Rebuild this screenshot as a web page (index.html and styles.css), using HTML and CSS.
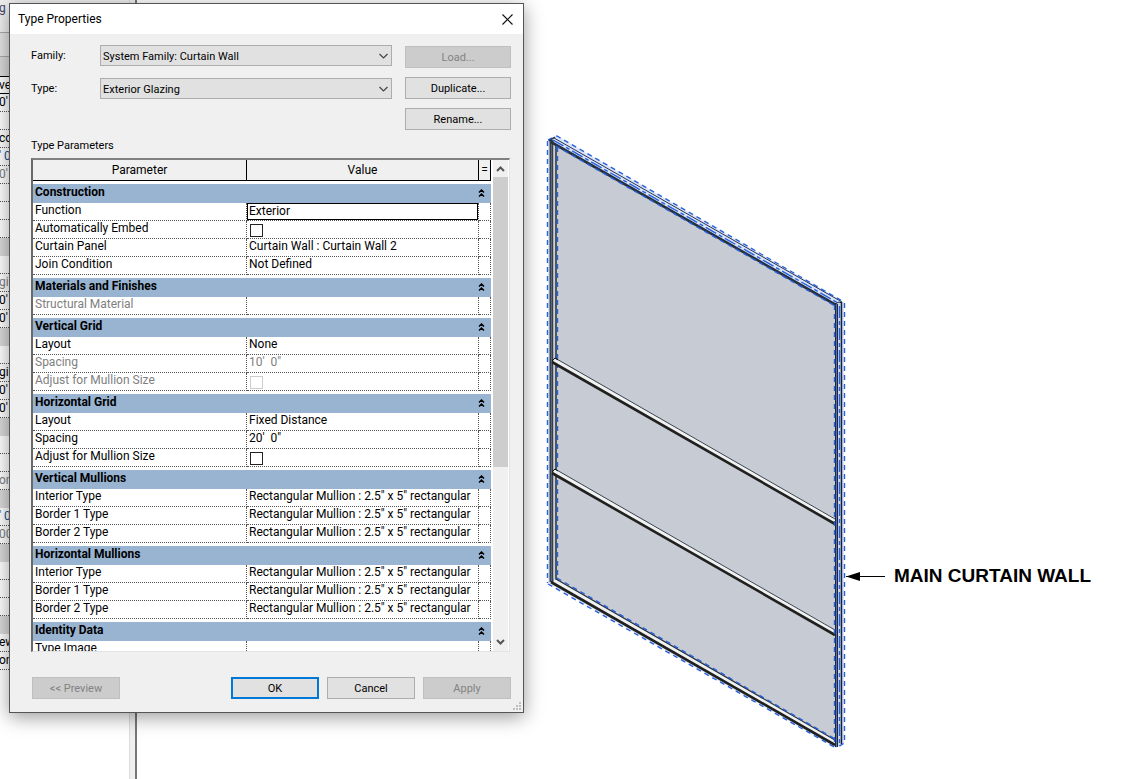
FILE: index.html
```
<!DOCTYPE html>
<html lang="en">

<head>
    <meta charset="UTF-8">
    <meta name="viewport" content="width=device-width, initial-scale=1.0">
    <title>Type Properties</title>
    <link rel="stylesheet" href="styles.css">
</head>

<body>
    <svg class="defs" width="0" height="0">
        <symbol id="collapse" viewBox="0 0 7 8">
            <path d="M1 3.5 3.5 1 6 3.5M1 7.5 3.5 5 6 7.5" fill="none" stroke="#000" stroke-width="1.5" />
        </symbol>
    </svg>

    <div class="workspace">
        <!-- properties palette -->
        <aside class="palette">
            <div class="palette-top">g</div>
            <div class="palette-filter"></div>
            <div class="palette-type"></div>
            <div class="palette-head">ve</div>
            <div class="prop">0'</div>
            <div class="prop"></div>
            <div class="prop">co</div>
            <div class="prop blue">' 0</div>
            <div class="prop dim">0'</div>
            <div class="prop"></div>
            <div class="prop"></div>
            <div class="prop"></div>
            <div class="prop section"></div>
            <div class="prop"></div>
            <div class="prop dim">gi</div>
            <div class="prop">0'</div>
            <div class="prop">0'</div>
            <div class="prop section"></div>
            <div class="prop"></div>
            <div class="prop">gi</div>
            <div class="prop">0'</div>
            <div class="prop">0'</div>
            <div class="prop section"></div>
            <div class="prop"></div>
            <div class="prop"></div>
            <div class="prop dim">on</div>
            <div class="prop section"></div>
            <div class="prop blue">' 0</div>
            <div class="prop dim">00</div>
            <div class="prop section"></div>
            <div class="prop"></div>
            <div class="prop"></div>
            <div class="prop"></div>
            <div class="prop section"></div>
            <div class="prop">ew</div>
            <div class="prop">on</div>
        </aside>
        <div class="splitter"></div>

        <!-- 3D view -->
        <main class="view">
            <svg class="drawing" viewBox="137 0 992 779" preserveAspectRatio="xMinYMin meet">
                <polygon points="548,140 557,136 844,302 844,743 836,748 548,583" fill="#dbe4fa" />
                <polygon points="556,145 835,305 835,742 556,581" fill="#c7cbd4" />

                <!-- left mullion -->
                <path d="M551.5 140V582" stroke="#35404d" stroke-width="4" />
                <path d="M551.5 142V581" stroke="#5d6876" />
                <path d="M554.5 144V579" stroke="#c9ced1" stroke-width="2" />
                <path d="M556 145V580" stroke="#242c36" stroke-width="1.5" />
                <path class="dash" d="M557.5 147V580" />
                <path class="dash" d="M547.5 141V583" />

                <!-- horizontal mullions -->
                <g>
                    <path d="M554 360 835 521" stroke="#f0f2f2" stroke-width="4" />
                    <path d="M555 358 835 519" stroke="#3b444f" />
                    <path d="M552 362 835 524" stroke="#20211f" stroke-width="2.6" />
                    <path d="M552 361 555 358 558 360" stroke="#111" fill="none" />
                    <path d="M554 471 835 632" stroke="#f0f2f2" stroke-width="4" />
                    <path d="M555 469 835 630" stroke="#3b444f" />
                    <path d="M552 473 835 635" stroke="#20211f" stroke-width="2.6" />
                    <path d="M552 472 555 469 558 471" stroke="#111" fill="none" />
                </g>

                <!-- sill -->
                <path d="M554 581 835 742" stroke="#f0f2f2" stroke-width="4" />
                <path d="M556 579 835 740" stroke="#252d37" stroke-width="1.2" />
                <path class="dash" d="M557 578 835 739" />
                <path d="M551 582 835 745" stroke="#20211f" stroke-width="2.6" />
                <path class="dash" d="M548 584 836 748" />

                <!-- head -->
                <path d="M551 142 836 305" stroke="#26313f" stroke-width="2.6" />
                <path class="dash" d="M556 146 835 306" />
                <path d="M554 138 842 302" stroke="#27344d" />
                <path class="dash long" d="M553 140 838 303" />
                <path class="dash" d="M548 140 557 136 844 302" />
                <path d="M549 141 555 137" stroke="#26313f" stroke-width="1.5" />

                <!-- right mullion -->
                <path d="M836.5 304V747" stroke="#1c2740" stroke-width="3" />
                <path d="M836.5 304V747" stroke="#6f83ad" stroke-width=".8" />
                <path class="dash" d="M834.5 305V742" />
                <path d="M839.5 303V746" stroke="#cbd4e8" stroke-width="3" />
                <path class="dash long" d="M839.5 306V746" />
                <path d="M841.5 302V744" stroke="#17203a" stroke-width="1.5" />
                <path d="M835 304 839 302 842 303" stroke="#17203a" fill="none" />
                <path class="dash" d="M844.5 303V743L836 748" />

                <!-- tag -->
                <path d="M846 576.5 860 572V581Z" fill="#000" />
                <path d="M846 576.5H885" stroke="#000" />
                <text class="tag" x="894" y="582">MAIN CURTAIN WALL</text>
            </svg>
        </main>
    </div>

    <form class="dialog" onsubmit="return false">
        <header class="titlebar">
            <span>Type Properties</span>
            <button type="button" class="close" aria-label="Close">
                <svg width="11" height="11"><path d="M.5 .5 10.5 10.5M10.5 .5.5 10.5" stroke="#111" stroke-width="1.2" /></svg>
            </button>
        </header>

        <div class="content">
            <div class="top">
                <div class="fields">
                    <label for="family">Family:</label>
                    <div class="combo">
                        <select id="family"><option>System Family: Curtain Wall</option></select>
                        <svg width="9" height="6"><path d="M.5 1 4.5 5 8.5 1" fill="none" stroke="#444" stroke-width="1.2" /></svg>
                    </div>
                    <label for="type">Type:</label>
                    <div class="combo">
                        <select id="type"><option>Exterior Glazing</option></select>
                        <svg width="9" height="6"><path d="M.5 1 4.5 5 8.5 1" fill="none" stroke="#444" stroke-width="1.2" /></svg>
                    </div>
                </div>
                <div class="actions">
                    <button type="button" disabled>Load...</button>
                    <button type="button">Duplicate...</button>
                    <button type="button">Rename...</button>
                </div>
            </div>

            <div class="caption" id="params">Type Parameters</div>

            <div class="grid">
                <div class="rows">
                    <table aria-labelledby="params">
                        <colgroup>
                            <col class="c-name">
                            <col>
                            <col class="c-eq">
                        </colgroup>
                        <thead>
                            <tr><th>Parameter</th><th>Value</th><th>=</th></tr>
                        </thead>
                        <tbody>
                            <tr class="group"><th colspan="3"><div>Construction<button type="button" aria-label="Collapse"><svg width="7" height="8"><use href="#collapse" /></svg></button></div></th></tr>
                            <tr><td>Function</td><td class="edit"><input type="text" value="Exterior" aria-label="Function"></td><td></td></tr>
                            <tr><td><label for="embed">Automatically Embed</label></td><td><input type="checkbox" id="embed"></td><td></td></tr>
                            <tr><td>Curtain Panel</td><td>Curtain Wall : Curtain Wall 2</td><td></td></tr>
                            <tr><td>Join Condition</td><td>Not Defined</td><td></td></tr>
                        </tbody>
                        <tbody>
                            <tr class="group"><th colspan="3"><div>Materials and Finishes<button type="button" aria-label="Collapse"><svg width="7" height="8"><use href="#collapse" /></svg></button></div></th></tr>
                            <tr class="off"><td>Structural Material</td><td></td><td></td></tr>
                        </tbody>
                        <tbody>
                            <tr class="group"><th colspan="3"><div>Vertical Grid<button type="button" aria-label="Collapse"><svg width="7" height="8"><use href="#collapse" /></svg></button></div></th></tr>
                            <tr><td>Layout</td><td>None</td><td></td></tr>
                            <tr class="off"><td>Spacing</td><td>10'&nbsp; 0"</td><td></td></tr>
                            <tr class="off"><td><label for="vadjust">Adjust for Mullion Size</label></td><td><input type="checkbox" id="vadjust" disabled></td><td></td></tr>
                        </tbody>
                        <tbody>
                            <tr class="group"><th colspan="3"><div>Horizontal Grid<button type="button" aria-label="Collapse"><svg width="7" height="8"><use href="#collapse" /></svg></button></div></th></tr>
                            <tr><td>Layout</td><td>Fixed Distance</td><td></td></tr>
                            <tr><td>Spacing</td><td>20'&nbsp; 0"</td><td></td></tr>
                            <tr><td><label for="hadjust">Adjust for Mullion Size</label></td><td><input type="checkbox" id="hadjust"></td><td></td></tr>
                        </tbody>
                        <tbody>
                            <tr class="group"><th colspan="3"><div>Vertical Mullions<button type="button" aria-label="Collapse"><svg width="7" height="8"><use href="#collapse" /></svg></button></div></th></tr>
                            <tr><td>Interior Type</td><td>Rectangular Mullion : 2.5" x 5" rectangular</td><td></td></tr>
                            <tr><td>Border 1 Type</td><td>Rectangular Mullion : 2.5" x 5" rectangular</td><td></td></tr>
                            <tr><td>Border 2 Type</td><td>Rectangular Mullion : 2.5" x 5" rectangular</td><td></td></tr>
                        </tbody>
                        <tbody>
                            <tr class="group"><th colspan="3"><div>Horizontal Mullions<button type="button" aria-label="Collapse"><svg width="7" height="8"><use href="#collapse" /></svg></button></div></th></tr>
                            <tr><td>Interior Type</td><td>Rectangular Mullion : 2.5" x 5" rectangular</td><td></td></tr>
                            <tr><td>Border 1 Type</td><td>Rectangular Mullion : 2.5" x 5" rectangular</td><td></td></tr>
                            <tr><td>Border 2 Type</td><td>Rectangular Mullion : 2.5" x 5" rectangular</td><td></td></tr>
                        </tbody>
                        <tbody>
                            <tr class="group"><th colspan="3"><div>Identity Data<button type="button" aria-label="Collapse"><svg width="7" height="8"><use href="#collapse" /></svg></button></div></th></tr>
                            <tr><td>Type Image</td><td></td><td></td></tr>
                        </tbody>
                    </table>
                </div>
                <div class="scrollbar">
                    <svg width="15" height="17"><path d="M4 11 7.5 7.5 11 11" fill="none" stroke="#555" stroke-width="2" /></svg>
                    <div class="thumb"></div>
                    <svg width="15" height="17"><path d="M4 6 7.5 9.5 11 6" fill="none" stroke="#555" stroke-width="2" /></svg>
                </div>
            </div>

            <footer class="footer">
                <button type="button" class="preview" disabled>&lt;&lt; Preview</button>
                <button type="submit" class="ok">OK</button>
                <button type="button">Cancel</button>
                <button type="button" disabled>Apply</button>
            </footer>
        </div>
        <svg class="grip" width="8" height="8"><path d="M6 0h2v2H6zM3 3h2v2H3zM6 3h2v2H6zM0 6h2v2H0zM3 6h2v2H3zM6 6h2v2H6z" fill="#bfbfbf" /></svg>
    </form>
</body>

</html>
```
FILE: styles.css
```
* {
    box-sizing: border-box;
}
body {
    margin: 0;
    background-color: #fff;
    font-family: Roboto, "Noto Sans", sans-serif;
    font-size: 11px;
    color: #000;
}
.defs {
    position: absolute;
}
.workspace {
    display: flex;
    height: 100vh;
    overflow: hidden;
}

/* palette */
.palette {
    width: 130px;
    border-right: 1px solid #dcdcdc;
    font-size: 12px;
    line-height: 16px;
    text-indent: -1px;
}
.palette-top {
    height: 33px;
    background-color: #f0f0f0;
    color: #446;
    border-bottom: 1px solid #aaa;
}
.palette-filter {
    height: 24px;
    background-color: #e4e4e4;
    border-bottom: 1px solid #aaa;
}
.palette-type {
    height: 19px;
    background-color: #dadada;
}
.palette-head {
    height: 18px;
    border-top: 1px solid #000;
    border-bottom: 1px solid #000;
}
.prop {
    height: 18px;
    border-bottom: 1px dotted #555;
}
.section {
    background-color: #dadada;
    border-bottom: 0;
}
.dim {
    color: #808080;
}
.blue {
    color: #1c4fa0;
}
.splitter {
    width: 7px;
    background-color: #f0f0f0;
    border-right: 2px solid #777;
}

/* 3D view */
.view {
    flex: 1;
}
.drawing {
    display: block;
    width: 100%;
}
.dash {
    fill: none;
    stroke: #2860dc;
    stroke-width: 1.4;
    stroke-dasharray: 5 4;
}
.long {
    stroke-dasharray: 12 3 4 3;
}
.tag {
    font: bold 19px "Liberation Sans", Arial, sans-serif;
}

/* dialog */
.dialog {
    position: absolute;
    top: 3px;
    left: 9px;
    bottom: 66px;
    width: 515px;
    display: flex;
    flex-direction: column;
    background-color: #f0f0f0;
    border: 1px solid #555;
    box-shadow: 0 4px 18px rgba(0, 0, 0, 0.4);
}
.titlebar {
    display: flex;
    align-items: center;
    justify-content: space-between;
    height: 30px;
    padding: 0 10px 0 8px;
    background-color: #fff;
    font-size: 12px;
}
.close {
    display: flex;
    padding: 0;
    border: 0;
    background: none;
}
.content {
    flex: 1;
    min-height: 0;
    display: flex;
    flex-direction: column;
    padding: 11px 12px 13px 21px;
}
.top {
    display: flex;
    gap: 13px;
}
.fields {
    flex: 1;
    display: grid;
    grid-template-columns: 69px 1fr;
    grid-auto-rows: 21px;
    row-gap: 12px;
    align-items: center;
}
.combo {
    display: grid;
    align-items: center;
}
.combo select,
.combo svg {
    grid-area: 1 / 1;
}
.combo svg {
    justify-self: end;
    margin-right: 4px;
    pointer-events: none;
}
select {
    appearance: none;
    width: 100%;
    height: 21px;
    padding: 1px 2px 0;
    border: 1px solid #adadad;
    border-radius: 0;
    background-color: #e1e1e1;
    color: #000;
    font: inherit;
}
.actions {
    display: flex;
    flex-direction: column;
    gap: 9px;
    width: 106px;
    padding-top: 1px;
}
.actions button,
.footer button {
    height: 22px;
    padding: 0;
    border: 1px solid #adadad;
    background-color: #e1e1e1;
    color: #000;
    font: inherit;
}
.actions button:disabled,
.footer button:disabled {
    border-color: #bfbfbf;
    background-color: #ccc;
    color: #838383;
}
.caption {
    margin-top: 8px;
    line-height: 16px;
    margin-bottom: 4px;
}

/* parameter grid */
.grid {
    flex: 1;
    min-height: 0;
    display: flex;
    margin-right: 1px;
    background-color: #fff;
    border: 2px solid #696969;
    border-top-color: #808080;
    border-right: 1px solid #e3e3e3;
    border-bottom: 1px solid #e3e3e3;
}
.rows {
    flex: 1;
    overflow: hidden;
    font-size: 12px;
}
table {
    width: 100%;
    table-layout: fixed;
    border-collapse: separate;
    border-spacing: 0;
}
.c-name {
    width: 214px;
}
.c-eq {
    width: 12px;
}
th,
td {
    height: 18px;
    padding: 0 0 0 2px;
    line-height: 15px;
    text-align: left;
    vertical-align: top;
    white-space: nowrap;
}
td {
    border-bottom: 1px dotted #555;
    border-right: 1px dotted #555;
}
thead th {
    height: 21px;
    padding: 0;
    line-height: 20px;
    background-color: #f0f0f0;
    border-right: 1px solid #000;
    border-bottom: 1px solid #000;
    font-weight: normal;
    text-align: center;
}
.group th {
    height: 22px;
    line-height: 17px;
    border-top: 3px solid #fff;
    background-color: #99b4d1;
    background-clip: padding-box;
}
.group div {
    display: flex;
    align-items: center;
    justify-content: space-between;
}
.group button {
    display: flex;
    margin-right: 6px;
    padding: 0;
    border: 0;
    background: none;
}
.off {
    color: #808080;
}
.edit {
    padding: 0;
}
.edit input {
    display: block;
    width: 100%;
    height: 17px;
    padding: 0 1px 1px;
    border: 1px solid #000;
    font: inherit;
}
input[type="checkbox"] {
    appearance: none;
    display: block;
    width: 13px;
    height: 13px;
    margin: 3px 0 0 1px;
    border: 1px solid #222;
    background-color: #fff;
}
input[type="checkbox"]:disabled {
    border-color: #ccc;
}
.scrollbar {
    display: flex;
    flex-direction: column;
    width: 15px;
    margin: 0 1px 0 2px;
    background-color: #f0f0f0;
}
.thumb {
    flex: 0 0 59%;
    margin-bottom: auto;
    background-color: #cdcdcd;
}

/* buttons */
.footer {
    display: flex;
    gap: 8px;
    padding: 25px 0 0 1px;
}
.footer button {
    width: 88px;
}
.footer .preview {
    margin-right: auto;
}
.footer .ok {
    border: 2px solid #0078d7;
}
.grip {
    position: absolute;
    right: 2px;
    bottom: 2px;
}
```
